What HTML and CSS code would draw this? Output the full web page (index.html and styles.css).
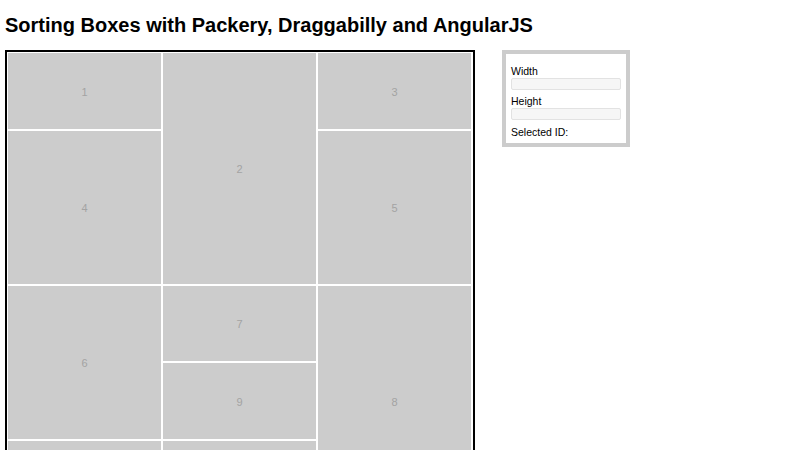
FILE: index.html
```html
<!DOCTYPE html>
<html>
<head>
<meta charset="utf-8">
<title>Sorting Boxes</title>
<link rel="stylesheet" href="styles.css">
</head>
<body>
<h1 class="title">Sorting Boxes with Packery, Draggabilly and AngularJS</h1>
<div class="layout">
  <div class="packery">
    <div class="item c1 r1"><span>1</span></div>
    <div class="item c2 r1 h3"><span>2</span></div>
    <div class="item c3 r1"><span>3</span></div>
    <div class="item c1 r2 h2"><span>4</span></div>
    <div class="item c3 r2 h2"><span>5</span></div>
    <div class="item c1 r4 h2"><span>6</span></div>
    <div class="item c2 r4"><span>7</span></div>
    <div class="item c3 r4 h3"><span>8</span></div>
    <div class="item c2 r5"><span>9</span></div>
    <div class="item c1 r6 h2"></div>
    <div class="item c2 r6 h2"></div>
  </div>
  <div class="panel">
    <label class="field-label">Width</label>
    <input class="field-input" type="text">
    <label class="field-label">Height</label>
    <input class="field-input field-input-last" type="text">
    <div class="field-label">Selected ID:</div>
  </div>
</div>
</body>
</html>
```
FILE: styles.css
```css
html, body {
  margin: 0;
  padding: 0;
  background: #fff;
  overflow: hidden;
}
body {
  padding: 0 5px;
  font-family: "Liberation Sans", Arial, sans-serif;
  color: #000;
}
.title {
  font-size: 20px;
  line-height: 23px;
  font-weight: bold;
  margin: 0;
  padding-top: 14px;
  margin-bottom: 13px;
}
.layout {
  display: flex;
  align-items: flex-start;
  gap: 27px;
}
.packery {
  width: 463px;
  border: 2px solid #000;
  padding: 1px 2px 40px 1px;
  display: grid;
  grid-template-columns: repeat(3, 153px);
  grid-auto-rows: 75.5px;
  column-gap: 2px;
  row-gap: 2px;
}
.item {
  background: #cccccc;
  display: flex;
  align-items: center;
  justify-content: center;
  padding-top: 2px;
  font-size: 11px;
  color: #a3a3a3;
}
.c1 { grid-column: 1; }
.c2 { grid-column: 2; }
.c3 { grid-column: 3; }
.r1 { grid-row-start: 1; }
.r2 { grid-row-start: 2; }
.r4 { grid-row-start: 4; }
.r5 { grid-row-start: 5; }
.r6 { grid-row-start: 6; }
.h2 { grid-row-end: span 2; }
.h3 { grid-row-end: span 3; }
.panel {
  width: 110px;
  border: 4px solid #cccccc;
  padding: 11px 5px 4px 5px;
  display: flex;
  flex-direction: column;
}
.field-label {
  font-size: 10.5px;
  line-height: 13px;
  display: block;
}
.field-input {
  box-sizing: border-box;
  width: 110px;
  height: 12px;
  margin: 0 0 5px 0;
  padding: 0;
  border: 1px solid #e2e2e2;
  border-radius: 2px;
  background: #f6f6f6;
}
.field-input-last {
  margin-bottom: 6px;
}
```
